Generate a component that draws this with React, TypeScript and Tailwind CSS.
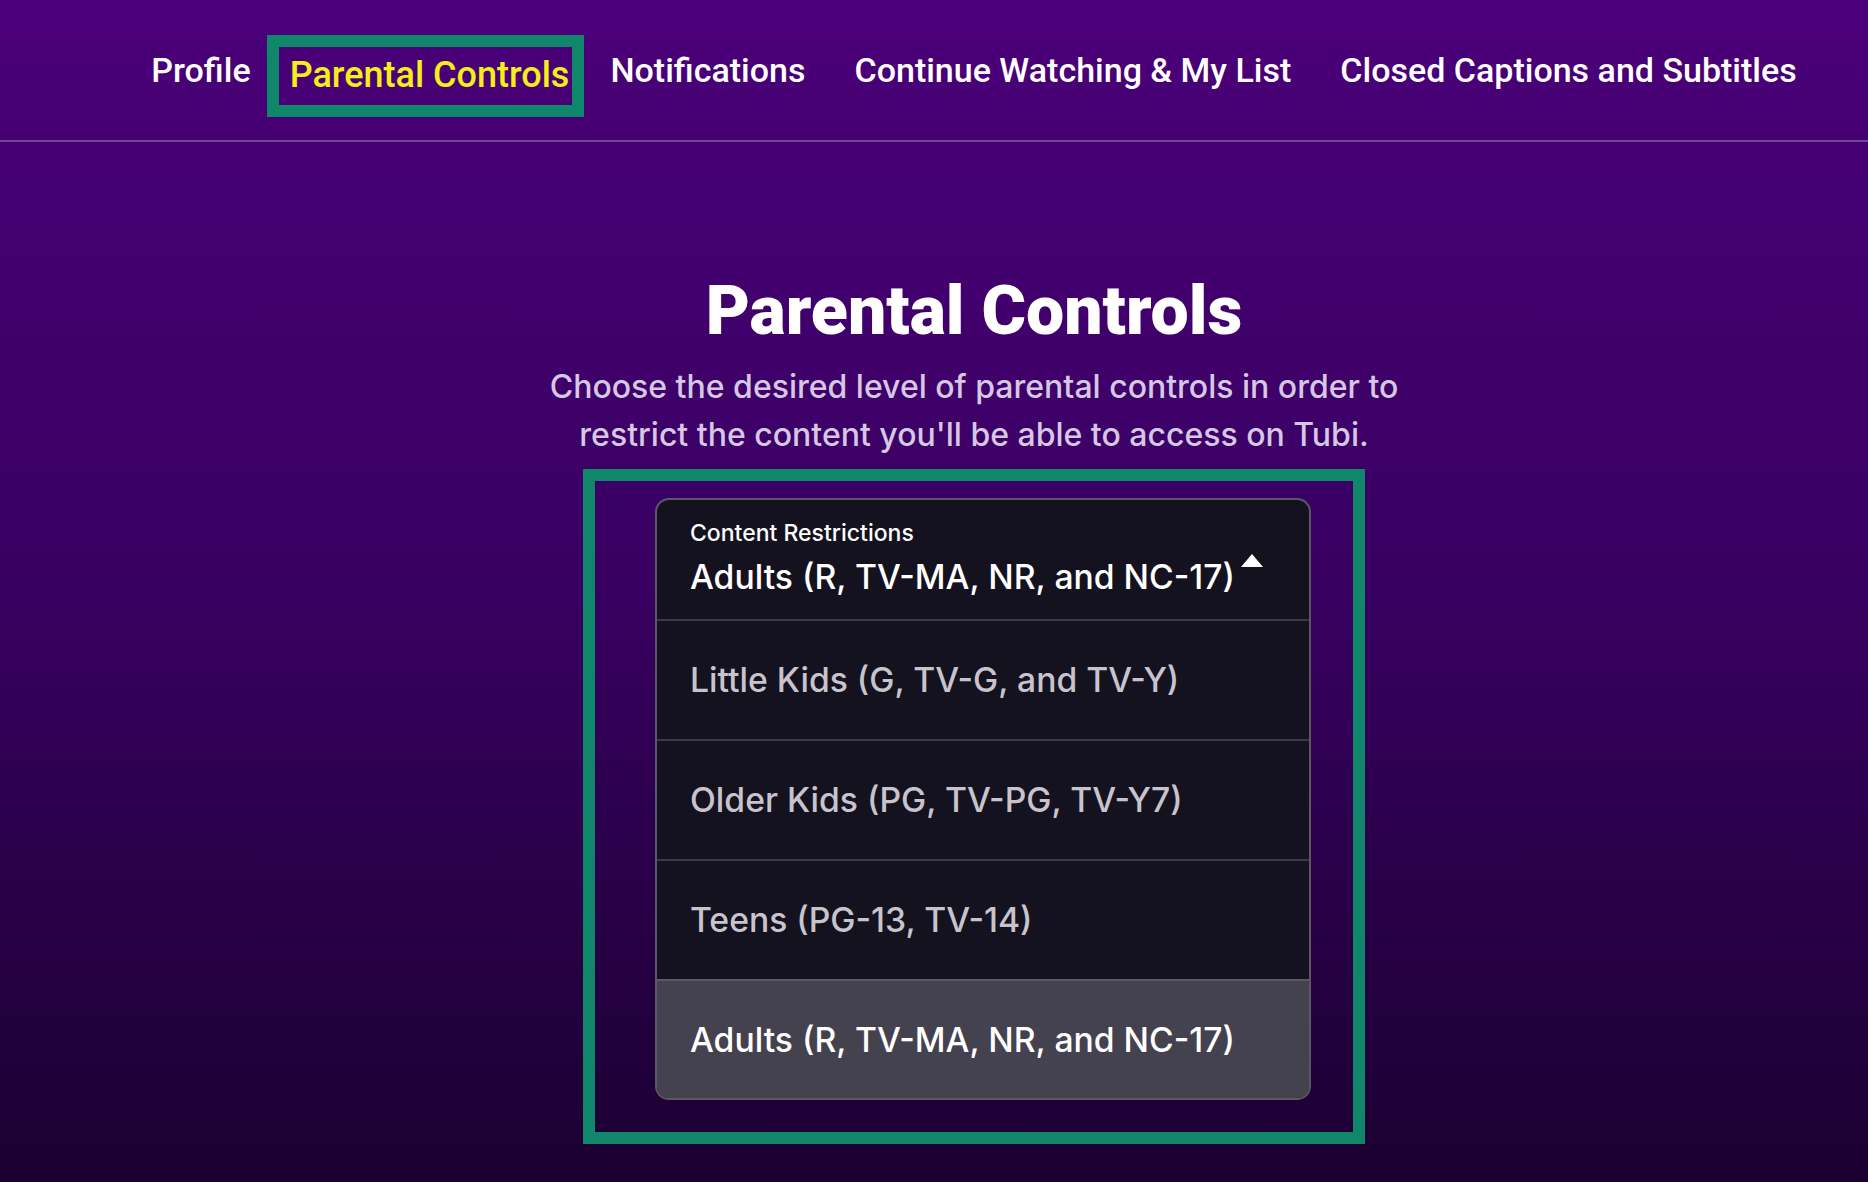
import React from 'react';

const NAV = ['Notifications', 'Continue Watching & My List', 'Closed Captions and Subtitles'];

const OPTIONS = [
  { label: 'Little Kids (G, TV-G, and TV-Y)', selected: false },
  { label: 'Older Kids (PG, TV-PG, TV-Y7)', selected: false },
  { label: 'Teens (PG-13, TV-14)', selected: false },
  { label: 'Adults (R, TV-MA, NR, and NC-17)', selected: true },
];

const navFont = "font-['Roboto',Arial,sans-serif]";

export default function App() {
  return (
    <div className="h-[1182px] w-full overflow-hidden bg-gradient-to-b from-[#4b0079] via-[#380061] to-[#1b0031] text-white">
      {/* top tabs */}
      <nav className={`flex h-[142px] items-start justify-center border-b-2 border-[#6a4a94] pl-[80px] ${navFont}`}>
        <span className="mt-[53px] text-[34px] font-medium leading-none text-white">Profile</span>
        <div className="ml-[16px] mt-[35px] border-[12px] border-[#10866b] pb-[12px] pl-[11px] pr-[3px] pt-[10px]">
          <span className="block text-[36px] font-medium leading-none text-[#f4ee1a]">Parental Controls</span>
        </div>
        {NAV.map((item, i) => (
          <span
            key={item}
            className={`mt-[53px] text-[34px] font-medium leading-none text-white ${i === 0 ? 'ml-[26px]' : 'ml-[49px]'}`}
          >
            {item}
          </span>
        ))}
      </nav>

      <main className="flex flex-col items-center pl-[80px] pt-[135px] font-['Inter',sans-serif]">
        <h1 className="font-['Roboto',sans-serif] text-[68px] font-black leading-none tracking-normal text-white">
          Parental Controls
        </h1>
        <p className="mt-[18px] text-center text-[32px] font-medium leading-[48px] text-[#d6c7e3]">
          Choose the desired level of parental controls in order to
          <br />
          restrict the content you'll be able to access on Tubi.
        </p>

        <div className="mt-[10px] border-[12px] border-[#10866b] pb-[32px] pl-[60px] pr-[42px] pt-[17px]">
          <div className="w-[656px] overflow-hidden rounded-[14px] border-2 border-[#5b5866] bg-[#15121f]">
            <div className="flex h-[119px] flex-col pl-[33px] pt-[22px]">
              <span className="text-[23px] font-medium leading-none text-white">Content Restrictions</span>
              <div className="mt-[15px] flex items-start">
                <span className="text-[33.7px] font-medium leading-none text-white">Adults (R, TV-MA, NR, and NC-17)</span>
                <svg className="ml-[6px] mt-[-6px]" width="22" height="13" viewBox="0 0 22 13">
                  <path d="M11 0 L22 13 L0 13 Z" fill="#ffffff" />
                </svg>
              </div>
            </div>
            {OPTIONS.map((o) => (
              <div
                key={o.label}
                className={
                  o.selected
                    ? 'flex h-[119px] items-center border-t-2 border-[#5b5866] bg-[#45424f] pl-[33px]'
                    : 'flex h-[120px] items-center border-t-2 border-[#3b3946] pl-[33px]'
                }
              >
                <span
                  className={`text-[33.7px] font-medium leading-none ${o.selected ? 'text-white' : 'text-[#c8c4cd]'}`}
                >
                  {o.label}
                </span>
              </div>
            ))}
          </div>
        </div>
      </main>
    </div>
  );
}
